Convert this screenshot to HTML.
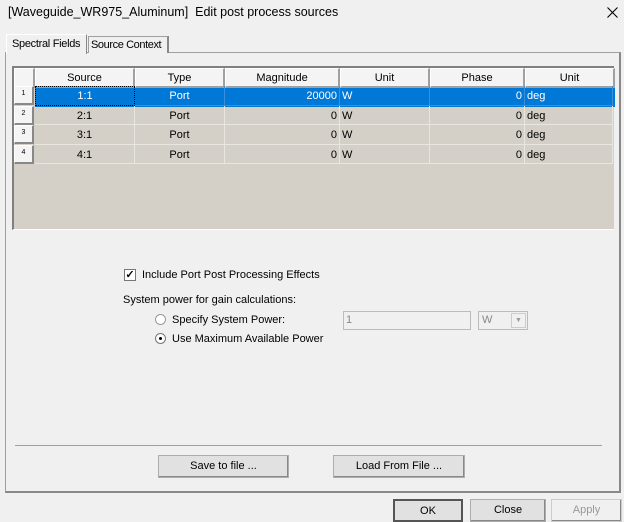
<!DOCTYPE html>
<html><head><style>
*{box-sizing:border-box;margin:0;padding:0}
body{width:624px;height:522px;background:#f0f0f0;font-family:"Liberation Sans",Arial,sans-serif;font-size:11px;color:#000;position:relative;overflow:hidden}
.a{position:absolute;white-space:nowrap}
.btn{position:absolute;background:#e1e1e1;border:1px solid #adadad;box-shadow:inset -1px -1px 0 #888;text-align:center;font-size:11px}
.cell{position:absolute;height:19.5px;line-height:20px;border-right:1px solid #e8e6e0;border-bottom:1px solid #e8e6e0;overflow:hidden;white-space:nowrap}
.hd{position:absolute;top:0;height:20px;line-height:18px;background:#f4f4f4;border:1px solid #fff;border-right:2px solid #a0a0a0;border-bottom:2px solid #a0a0a0;text-align:center}
.rn{position:absolute;left:0;width:20px;height:19px;background:#f4f4f4;border:1px solid #fff;border-right:2px solid #888;border-bottom:2px solid #888;font-size:7px;text-align:center;line-height:13px}
</style></head><body>
<div class="a" style="left:8px;top:5px;font-size:12.5px;">[Waveguide_WR975_Aluminum]&nbsp; Edit post process sources</div>
<svg class="a" style="left:607px;top:7px" width="11" height="11" viewBox="0 0 11 11"><path d="M0.5 0.5L10.5 10.5M10.5 0.5L0.5 10.5" stroke="#000" stroke-width="1.1"/></svg>
<!-- panel -->
<div class="a" style="left:5px;top:52px;width:616px;height:441px;border:1px solid #a0a0a0;border-right:2px solid #888;border-bottom:2px solid #888;background:#f0f0f0"></div>
<div class="a" style="left:88px;top:36px;width:81px;height:17px;border:1px solid #a0a0a0;border-bottom:none;border-right:2px solid #888;background:#f0f0f0;font-size:11px;padding-left:2px;line-height:16px;letter-spacing:-0.4px;overflow:hidden">Source Context</div>
<div class="a" style="left:6px;top:34px;width:81px;height:20px;border:1px solid #fff;border-bottom:none;border-right:1px solid #888;background:#f0f0f0;font-size:11px;padding-left:5px;line-height:18px;letter-spacing:-0.3px;overflow:hidden">Spectral Fields</div>
<!-- grid -->
<div class="a" style="left:12px;top:66px;width:602px;height:164px;background:#d4d0c8;border-top:2px solid #808080;border-left:2px solid #808080;border-bottom:1px solid #fff">
<div class="hd" style="left:0;width:21px"></div>
<div class="hd" style="left:21px;width:100px">Source</div>
<div class="hd" style="left:121px;width:90px">Type</div>
<div class="hd" style="left:211px;width:115px">Magnitude</div>
<div class="hd" style="left:326px;width:90px">Unit</div>
<div class="hd" style="left:416px;width:95px">Phase</div>
<div class="hd" style="left:511px;width:90px">Unit</div>
<div style="position:absolute;left:21px;top:20px;width:580px;height:19px;background:#0078d7"></div>
</div>
<div class="a" style="left:14px;top:86px;width:600px;height:80px;">
<div class="rn" style="top:0">1</div><div class="rn" style="top:19.5px">2</div><div class="rn" style="top:39px">3</div><div class="rn" style="top:58.5px">4</div>
</div>
<div class="a" style="left:35px;top:86px;width:578px;height:80px;font-size:11px">
<div class="cell" style="top:0;left:0;width:100px;text-align:center;color:#fff;border:1px dotted #000;line-height:18px">1:1</div>
<div class="cell" style="top:0;left:100px;width:90px;text-align:center;color:#fff;border-color:#3a8fdc">Port</div>
<div class="cell" style="top:0;left:190px;width:115px;text-align:right;color:#fff;padding-right:2px;border-color:#3a8fdc">20000</div>
<div class="cell" style="top:0;left:305px;width:90px;color:#fff;padding-left:2px;border-color:#3a8fdc">W</div>
<div class="cell" style="top:0;left:395px;width:95px;text-align:right;color:#fff;padding-right:2px;border-color:#3a8fdc">0</div>
<div class="cell" style="top:0;left:490px;width:88px;color:#fff;padding-left:2px;border-color:#3a8fdc">deg</div>
<div class="cell" style="top:19.5px;left:0;width:100px;text-align:center">2:1</div>
<div class="cell" style="top:19.5px;left:100px;width:90px;text-align:center">Port</div>
<div class="cell" style="top:19.5px;left:190px;width:115px;text-align:right;padding-right:2px">0</div>
<div class="cell" style="top:19.5px;left:305px;width:90px;padding-left:2px">W</div>
<div class="cell" style="top:19.5px;left:395px;width:95px;text-align:right;padding-right:2px">0</div>
<div class="cell" style="top:19.5px;left:490px;width:88px;padding-left:2px">deg</div>
<div class="cell" style="top:39px;left:0;width:100px;text-align:center">3:1</div>
<div class="cell" style="top:39px;left:100px;width:90px;text-align:center">Port</div>
<div class="cell" style="top:39px;left:190px;width:115px;text-align:right;padding-right:2px">0</div>
<div class="cell" style="top:39px;left:305px;width:90px;padding-left:2px">W</div>
<div class="cell" style="top:39px;left:395px;width:95px;text-align:right;padding-right:2px">0</div>
<div class="cell" style="top:39px;left:490px;width:88px;padding-left:2px">deg</div>
<div class="cell" style="top:58.5px;left:0;width:100px;text-align:center">4:1</div>
<div class="cell" style="top:58.5px;left:100px;width:90px;text-align:center">Port</div>
<div class="cell" style="top:58.5px;left:190px;width:115px;text-align:right;padding-right:2px">0</div>
<div class="cell" style="top:58.5px;left:305px;width:90px;padding-left:2px">W</div>
<div class="cell" style="top:58.5px;left:395px;width:95px;text-align:right;padding-right:2px">0</div>
<div class="cell" style="top:58.5px;left:490px;width:88px;padding-left:2px">deg</div>
</div>
<!-- options -->
<div class="a" style="left:124px;top:269px;width:12px;height:12px;border:1px solid #777;background:#fff;font-size:11px;line-height:10px;text-align:center;font-weight:bold">✓</div>
<div class="a" style="left:142px;top:269px">Include Port Post Processing Effects</div>
<div class="a" style="left:123px;top:294px">System power for gain calculations:</div>
<div class="a" style="left:155px;top:314px;width:11px;height:11px;border:1px solid #999;border-radius:50%;background:#fff"></div>
<div class="a" style="left:172px;top:314px">Specify System Power:</div>
<div class="a" style="left:155px;top:333px;width:11px;height:11px;border:1px solid #777;border-radius:50%;background:#fff"><div style="position:absolute;left:3px;top:3px;width:3px;height:3px;border-radius:50%;background:#000"></div></div>
<div class="a" style="left:172px;top:333px">Use Maximum Available Power</div>
<div class="a" style="left:343px;top:311px;width:128px;height:19px;border:1px solid #bbb;background:#f0f0f0;color:#888;padding-left:2px;line-height:17px">1</div>
<div class="a" style="left:478px;top:311px;width:50px;height:19px;border:1px solid #bbb;background:#f0f0f0;color:#888;padding-left:3px;line-height:17px">W<div style="position:absolute;right:1px;top:1px;width:15px;height:15px;border:1px solid #ccc;font-size:7px;text-align:center;line-height:14px;color:#999">▼</div></div>
<div class="a" style="left:15px;top:445px;width:587px;height:1px;background:#a0a0a0"></div>
<div class="btn" style="left:158px;top:455px;width:131px;height:23px;line-height:21px">Save to file ...</div>
<div class="btn" style="left:333px;top:455px;width:132px;height:23px;line-height:21px">Load From File ...</div>
<div class="btn" style="left:393px;top:499px;width:70px;height:23px;line-height:20px;border:2px solid #555;box-shadow:none">OK</div>
<div class="btn" style="left:470px;top:499px;width:76px;height:23px;line-height:21px">Close</div>
<div class="btn" style="left:551px;top:499px;width:71px;height:23px;line-height:21px;color:#999;background:#f0f0f0;border-color:#ccc">Apply</div>
</body></html>
